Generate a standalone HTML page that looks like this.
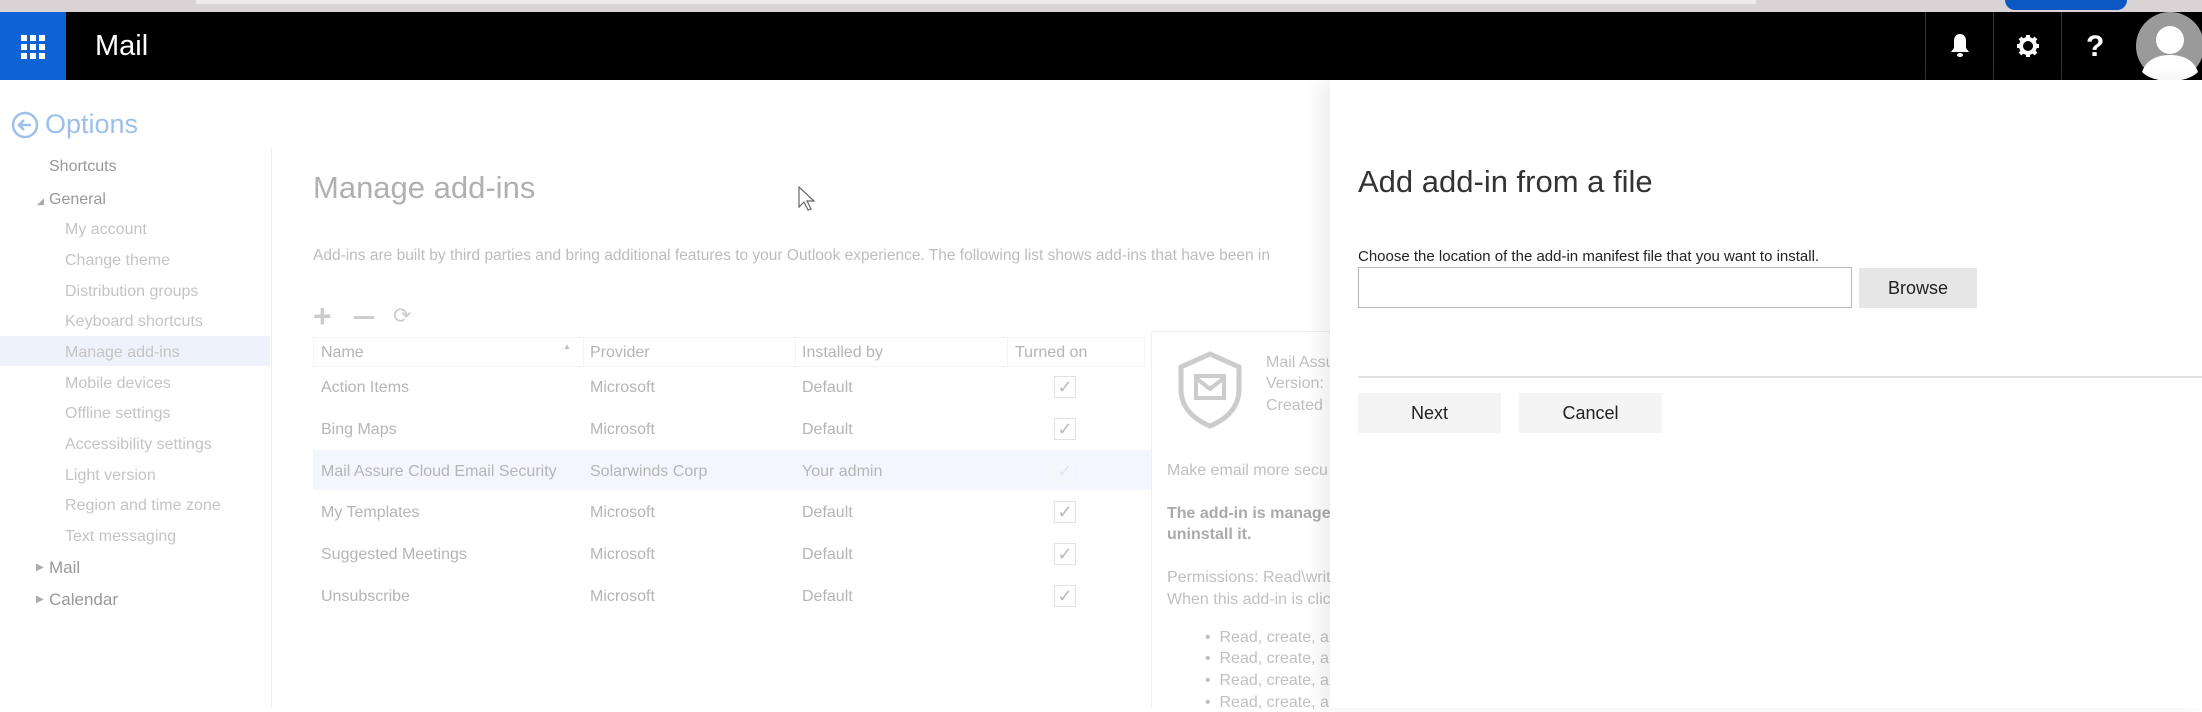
<!DOCTYPE html>
<html><head><meta charset="utf-8"><style>
*{margin:0;padding:0;box-sizing:border-box}
body{width:2202px;height:708px;position:relative;overflow:hidden;background:#fff;font-family:"Liberation Sans",sans-serif}
.a{position:absolute;white-space:nowrap}
.nav{position:absolute;left:65px;font-size:16px;color:#c4c4c4}
.cell{position:absolute;font-size:16px;color:#b5b5b5}
.cb{position:absolute;width:22px;height:22px;border:1px solid #e2e2e2;color:#bbb;font-size:18px;line-height:20px;text-align:center}
.det{position:absolute;left:1167px;font-size:16px;color:#c0c0c0}
.btn{position:absolute;background:#f4f4f4;font-size:18px;color:#222;text-align:center}
</style></head><body>
<div class="a" style="left:0;top:0;width:2202px;height:12px;background:#d9d3d6"></div>
<div class="a" style="left:196px;top:0;width:1560px;height:4px;background:#eeeaec"></div>
<div class="a" style="left:2005px;top:0;width:122px;height:10px;background:#0b58c3;border-radius:0 0 14px 14px"></div>
<div class="a" style="left:0;top:12px;width:2202px;height:68px;background:#000"></div>
<div class="a" style="left:0;top:12px;width:66px;height:68px;background:#0f62d4"></div>
<svg class="a" style="left:20px;top:34px" width="26" height="26" viewBox="0 0 26 26" fill="#fff">
<rect x="1" y="1" width="6" height="6"/><rect x="10" y="1" width="6" height="6"/><rect x="19" y="1" width="6" height="6"/>
<rect x="1" y="10" width="6" height="6"/><rect x="10" y="10" width="6" height="6"/><rect x="19" y="10" width="6" height="6"/>
<rect x="1" y="19" width="6" height="6"/><rect x="10" y="19" width="6" height="6"/><rect x="19" y="19" width="6" height="6"/></svg>
<div class="a" style="left:95px;top:30px;font-size:29px;color:#fff">Mail</div>
<div class="a" style="left:1925px;top:12px;width:1px;height:68px;background:#333"></div>
<div class="a" style="left:1993px;top:12px;width:1px;height:68px;background:#333"></div>
<div class="a" style="left:2061px;top:12px;width:1px;height:68px;background:#333"></div>
<svg class="a" style="left:1950px;top:33px" width="20" height="26" viewBox="0 0 20 26" fill="#fff"><path d="M10 1c-4 0-6 3-6 7v7l-3 4h18l-3-4V8c0-4-2-7-6-7z"/><ellipse cx="10" cy="22" rx="3" ry="2"/></svg>
<svg class="a" style="left:2016px;top:34px" width="24" height="24" viewBox="0 0 24 24"><circle cx="12" cy="12" r="7" fill="none" stroke="#fff" stroke-width="4"/><g stroke="#fff" stroke-width="4"><path d="M12 1v5M12 18v5M1 12h5M18 12h5M4 4l3.5 3.5M16.5 16.5L20 20M20 4l-3.5 3.5M7.5 16.5L4 20"/></g></svg>
<div class="a" style="left:2086px;top:30px;font-size:30px;font-weight:bold;color:#fff">?</div>
<svg class="a" style="left:2136px;top:12px" width="68" height="68" viewBox="0 0 68 68"><circle cx="34" cy="34" r="34" fill="#9a9a9a"/><circle cx="34" cy="28" r="14" fill="#fff"/><path d="M6 60c4-12 15-17 28-17s24 5 28 17c-6 6-16 9-28 9S12 66 6 60z" fill="#fff"/></svg>

<svg class="a" style="left:11px;top:111px" width="28" height="28" viewBox="0 0 28 28"><circle cx="14" cy="14" r="12" fill="none" stroke="#9cc0ea" stroke-width="2.5"/><path d="M20 14H8M13 9l-5 5 5 5" fill="none" stroke="#9cc0ea" stroke-width="2.5"/></svg>
<div class="a" style="left:45px;top:109px;font-size:27px;color:#9cc0ea">Options</div>
<div class="a" style="left:271px;top:147px;width:1px;height:561px;background:#eee"></div>
<div class="a" style="left:0;top:336px;width:270px;height:30px;background:#eef2fa"></div>
<div class="nav" style="left:49px;top:158px;color:#999">Shortcuts</div>
<div class="a" style="left:37px;top:196px;font-size:9px;color:#aaa">◢</div>
<div class="nav" style="left:49px;top:191px;color:#999">General</div>
<div class="nav" style="top:221px">My account</div>
<div class="nav" style="top:252px">Change theme</div>
<div class="nav" style="top:283px">Distribution groups</div>
<div class="nav" style="top:313px">Keyboard shortcuts</div>
<div class="nav" style="top:344px">Manage add-ins</div>
<div class="nav" style="top:375px">Mobile devices</div>
<div class="nav" style="top:405px">Offline settings</div>
<div class="nav" style="top:436px">Accessibility settings</div>
<div class="nav" style="top:467px">Light version</div>
<div class="nav" style="top:497px">Region and time zone</div>
<div class="nav" style="top:528px">Text messaging</div>
<div class="a" style="left:36px;top:562px;font-size:10px;color:#aaa">▶</div>
<div class="nav" style="left:49px;top:558px;color:#999;font-size:17px">Mail</div>
<div class="a" style="left:36px;top:594px;font-size:10px;color:#aaa">▶</div>
<div class="nav" style="left:49px;top:590px;color:#999;font-size:17px">Calendar</div>

<div class="a" style="left:313px;top:170px;font-size:31px;color:#b0b0b0">Manage add-ins</div>
<div class="a" style="left:313px;top:247px;font-size:15.5px;color:#bdbdbd">Add-ins are built by third parties and bring additional features to your Outlook experience. The following list shows add-ins that have been in</div>
<div class="a" style="left:313px;top:298px;font-size:32px;color:#ccc;font-weight:bold">+</div>
<div class="a" style="left:354px;top:316px;width:20px;height:3px;background:#ccc"></div>
<div class="a" style="left:393px;top:303px;font-size:22px;color:#ccc">⟳</div>
<div class="a" style="left:313px;top:337px;width:832px;height:30px;border:1px solid #f3f3f3"></div>
<div class="a" style="left:583px;top:338px;width:1px;height:28px;background:#f3f3f3"></div>
<div class="a" style="left:795px;top:338px;width:1px;height:28px;background:#f3f3f3"></div>
<div class="a" style="left:1007px;top:338px;width:1px;height:28px;background:#f3f3f3"></div>
<div class="cell" style="left:321px;top:344px">Name</div>
<div class="a" style="left:563px;top:342px;font-size:8px;color:#bbb">▲</div>
<div class="cell" style="left:590px;top:344px">Provider</div>
<div class="cell" style="left:802px;top:344px">Installed by</div>
<div class="cell" style="left:1015px;top:344px">Turned on</div>
<div class="a" style="left:313px;top:450px;width:838px;height:40px;background:#f4f6fd"></div>

<div class="cell" style="left:321px;top:379px">Action Items</div><div class="cell" style="left:590px;top:379px">Microsoft</div><div class="cell" style="left:802px;top:379px">Default</div><div class="cb" style="left:1054px;top:376px">✓</div>
<div class="cell" style="left:321px;top:421px">Bing Maps</div><div class="cell" style="left:590px;top:421px">Microsoft</div><div class="cell" style="left:802px;top:421px">Default</div><div class="cb" style="left:1054px;top:418px">✓</div>
<div class="cell" style="left:321px;top:463px">Mail Assure Cloud Email Security</div><div class="cell" style="left:590px;top:463px">Solarwinds Corp</div><div class="cell" style="left:802px;top:463px">Your admin</div><div class="cb" style="left:1054px;top:460px;color:#e6e6e6;border-color:#f4f4f4">✓</div>
<div class="cell" style="left:321px;top:504px">My Templates</div><div class="cell" style="left:590px;top:504px">Microsoft</div><div class="cell" style="left:802px;top:504px">Default</div><div class="cb" style="left:1054px;top:501px">✓</div>
<div class="cell" style="left:321px;top:546px">Suggested Meetings</div><div class="cell" style="left:590px;top:546px">Microsoft</div><div class="cell" style="left:802px;top:546px">Default</div><div class="cb" style="left:1054px;top:543px">✓</div>
<div class="cell" style="left:321px;top:588px">Unsubscribe</div><div class="cell" style="left:590px;top:588px">Microsoft</div><div class="cell" style="left:802px;top:588px">Default</div><div class="cb" style="left:1054px;top:585px">✓</div>

<div class="a" style="left:1151px;top:331px;width:200px;height:377px;border-left:1px solid #f0f0f0;border-top:1px solid #f0f0f0"></div>
<svg class="a" style="left:1177px;top:351px" width="66" height="78" viewBox="0 0 66 78"><path d="M33 3L4 16v22c0 18 12 30 29 37 17-7 29-19 29-37V16z" fill="none" stroke="#ccc" stroke-width="5"/><rect x="19" y="25" width="28" height="22" fill="none" stroke="#ccc" stroke-width="4"/><path d="M19 27l14 11 14-11" fill="none" stroke="#ccc" stroke-width="4"/></svg>
<div class="det" style="left:1266px;top:354px">Mail Assu</div>
<div class="det" style="left:1266px;top:375px">Version:</div>
<div class="det" style="left:1266px;top:397px">Created</div>
<div class="det" style="top:462px">Make email more secu</div>
<div class="det" style="top:505px;font-weight:bold;color:#aaa">The add-in is managed</div>
<div class="det" style="top:526px;font-weight:bold;color:#aaa">uninstall it.</div>
<div class="det" style="top:569px">Permissions: Read\write</div>
<div class="det" style="top:591px">When this add-in is clic</div>
<div class="det" style="left:1205px;top:629px">•&nbsp; Read, create, ar</div>
<div class="det" style="left:1205px;top:650px">•&nbsp; Read, create, ar</div>
<div class="det" style="left:1205px;top:672px">•&nbsp; Read, create, ar</div>
<div class="det" style="left:1205px;top:694px">•&nbsp; Read, create, ar</div>
<svg class="a" style="left:798px;top:186px" width="18" height="26" viewBox="0 0 18 26"><path d="M1 1v20l5-5 4 8 3-1-4-8h7z" fill="#fff" stroke="#666" stroke-width="1.2"/></svg>

<div class="a" style="left:1330px;top:80px;width:872px;height:628px;background:#fff;box-shadow:-10px 0 18px rgba(0,0,0,0.07)"></div>
<div class="a" style="left:1358px;top:164px;font-size:31px;color:#333">Add add-in from a file</div>
<div class="a" style="left:1358px;top:248px;font-size:15px;color:#222">Choose the location of the add-in manifest file that you want to install.</div>
<div class="a" style="left:1358px;top:267px;width:494px;height:41px;border:1px solid #b8b8b8"></div>
<div class="btn" style="left:1859px;top:268px;width:118px;height:40px;line-height:40px;background:#e6e6e6">Browse</div>
<div class="a" style="left:1358px;top:376px;width:844px;height:2px;background:#e2e2e2"></div>
<div class="btn" style="left:1358px;top:393px;width:143px;height:40px;line-height:40px">Next</div>
<div class="btn" style="left:1519px;top:393px;width:143px;height:40px;line-height:40px">Cancel</div>
</body></html>
